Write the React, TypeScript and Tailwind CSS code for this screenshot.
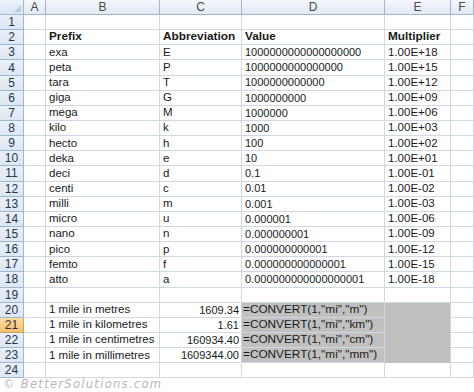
const cols = ['A', 'B', 'C', 'D', 'E', 'F'];
const widths = ['w-[22px]', 'w-[114px]', 'w-[82px]', 'w-[143px]', 'w-[66px]', 'flex-1'];

type Row = { b?: string; c?: string; d?: string; e?: string; bold?: boolean; num?: boolean; formula?: boolean };

const rows: Row[] = [
  {},
  { b: 'Prefix', c: 'Abbreviation', d: 'Value', e: 'Multiplier', bold: true },
  { b: 'exa', c: 'E', d: '1000000000000000000', e: '1.00E+18' },
  { b: 'peta', c: 'P', d: '1000000000000000', e: '1.00E+15' },
  { b: 'tara', c: 'T', d: '1000000000000', e: '1.00E+12' },
  { b: 'giga', c: 'G', d: '1000000000', e: '1.00E+09' },
  { b: 'mega', c: 'M', d: '1000000', e: '1.00E+06' },
  { b: 'kilo', c: 'k', d: '1000', e: '1.00E+03' },
  { b: 'hecto', c: 'h', d: '100', e: '1.00E+02' },
  { b: 'deka', c: 'e', d: '10', e: '1.00E+01' },
  { b: 'deci', c: 'd', d: '0.1', e: '1.00E-01' },
  { b: 'centi', c: 'c', d: '0.01', e: '1.00E-02' },
  { b: 'milli', c: 'm', d: '0.001', e: '1.00E-03' },
  { b: 'micro', c: 'u', d: '0.000001', e: '1.00E-06' },
  { b: 'nano', c: 'n', d: '0.000000001', e: '1.00E-09' },
  { b: 'pico', c: 'p', d: '0.000000000001', e: '1.00E-12' },
  { b: 'femto', c: 'f', d: '0.000000000000001', e: '1.00E-15' },
  { b: 'atto', c: 'a', d: '0.000000000000000001', e: '1.00E-18' },
  {},
  { b: '1 mile in metres', c: '1609.34', d: '=CONVERT(1,"mi","m")', num: true, formula: true },
  { b: '1 mile in kilometres', c: '1.61', d: '=CONVERT(1,"mi","km")', num: true, formula: true },
  { b: '1 mile in centimetres', c: '160934.40', d: '=CONVERT(1,"mi","cm")', num: true, formula: true },
  { b: '1 mile in millimetres', c: '1609344.00', d: '=CONVERT(1,"mi","mm")', num: true, formula: true },
  {},
];

const cell = 'h-full border-r border-b border-[#d0d7e5] flex items-center overflow-visible whitespace-nowrap';

export default function App() {
  return (
    <div className="w-[474px] h-[392px] bg-white overflow-hidden text-[11.5px] text-[#1a1a1a]" style={{ fontFamily: '"Liberation Sans", Arial, sans-serif' }}>
      {/* column headers */}
      <div className="flex h-[15px]">
        <div className="w-[24px] h-full relative bg-gradient-to-b from-[#eef3fa] to-[#dbe4f1] border-r border-b border-[#9eb6ce]">
          <div className="absolute right-[2px] bottom-[2px] w-0 h-0 border-l-[7px] border-l-transparent border-b-[7px] border-b-[#b9c9dc]" />
        </div>
        {cols.map((c, i) => (
          <div key={c} className={`${widths[i]} h-full flex items-center justify-center bg-gradient-to-b from-[#f4f7fb] to-[#e2e9f3] border-r border-b border-[#9eb6ce] text-[12px] text-[#4a4a4a]`}>
            {c}
          </div>
        ))}
      </div>

      {rows.map((r, idx) => {
        const n = idx + 1;
        const active = n === 21;
        const weight = r.bold ? 'font-bold text-[11.8px]' : '';
        return (
          <div key={n} className="flex h-[15.15px]">
            <div
              className={`w-[24px] h-full flex items-center justify-center border-r border-b text-[12px] ${
                active
                  ? 'bg-gradient-to-b from-[#fbdc9f] to-[#f6c06d] border-[#c5a567] text-[#333]'
                  : 'bg-gradient-to-b from-[#eaf0f8] to-[#dde6f2] border-[#9eb6ce] text-[#22384f]'
              }`}
            >
              {n}
            </div>
            <div className={`${widths[0]} ${cell}`} />
            <div className={`${widths[1]} ${cell} pl-[3px] ${weight}`}>{r.b}</div>
            <div className={`${widths[2]} ${cell} ${r.num ? 'justify-end pr-[2px] text-[11px]' : 'pl-[3px]'} ${weight}`}>{r.c}</div>
            <div className={`${widths[3]} ${cell} relative z-10 ${r.formula ? 'bg-[#c0c0c0] pl-[1px] border-[#c0c0c0] text-[11.8px]' : 'pl-[3px]'} ${weight}`}>
              <span className={r.d && /^[0-9.]+$/.test(r.d) ? 'text-[11px]' : ''}>{r.d}</span>
            </div>
            <div className={`${widths[4]} ${cell} pl-[3px] ${r.formula ? 'bg-[#c0c0c0] border-b-[#c0c0c0]' : ''} ${weight}`}>{r.e}</div>
            <div className={`${widths[5]} ${cell}`} />
          </div>
        );
      })}

      <div className="pl-[3px] h-[13px] leading-[13px] italic text-[11.5px] tracking-[1.3px] text-[#b8b8b8]" style={{ fontFamily: '"DejaVu Sans", sans-serif' }}>
        © BetterSolutions.com
      </div>
    </div>
  );
}
